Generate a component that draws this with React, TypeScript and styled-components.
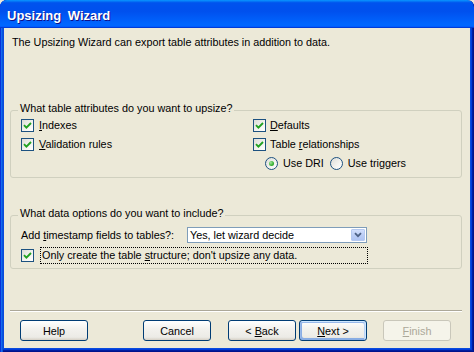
import React from 'react';
import styled, { createGlobalStyle, css } from 'styled-components';

const FONT = '"Liberation Sans", Arial, sans-serif';
const FACE = '#ECE9D8';
const GROUP_LINE = '#D0D0BF';
const CTL_BORDER = '#1C5180';
const CHECK_GREEN = '#21A121';

const GlobalStyle = createGlobalStyle`
  html, body { margin: 0; padding: 0; background: ${FACE}; }
  #root { width: 474px; height: 352px; }
  * { box-sizing: border-box; }
`;

const Window = styled.div`
  width: 474px; height: 352px; display: flex; flex-direction: column;
  padding: 0 4px 4px; border-radius: 7px 7px 0 0; overflow: hidden;
  background: #0A4BDD;
  box-shadow: inset 1px 0 #0831D9, inset 2px 0 #166AEE, inset 3px 0 #0855DD,
    inset -1px -1px #00138C, inset -2px -2px #001EA0, inset -3px -3px #003BDA;
  font-family: ${FONT}; font-size: 10.8px; color: #000;
`;
const TitleBar = styled.div`
  height: 28px; margin: 0 -4px; padding: 3px 0 0 7px; flex: none;
  border-radius: 7px 7px 0 0;
  background: linear-gradient(180deg, #0997FF 0%, #0053EE 10%, #0050EE 40%, #0066FF 86%, #0066FF 92%, #005BFF 95%, #003DD7 97%, #003DD7 100%);
`;
const TitleText = styled.div`
  line-height: 25px; font-size: 13px; font-weight: bold; color: #fff; word-spacing: 3px;
  text-shadow: 1px 1px #0F1089;
`;
const Body = styled.div`
  flex: 1; background: ${FACE}; padding: 0 8px 0 6px; display: flex; flex-direction: column;
`;
const Intro = styled.p`
  margin: 7px 0 0 2px; line-height: 14px;
`;
const GroupBox = styled.section<{ $top: number; $pad: string }>`
  position: relative; margin-top: ${p => p.$top}px; padding: ${p => p.$pad};
  border: 1px solid ${GROUP_LINE}; border-radius: 3px;
`;
const Caption = styled.div`
  position: absolute; top: -9px; left: 7px; padding: 0 2px;
  line-height: 12px; background: ${FACE};
`;
const OptionGrid = styled.div`
  display: grid; grid-template-columns: 232px 1fr; grid-auto-rows: 19px;
`;
const CheckRow = styled.label<{ $gap?: number }>`
  display: flex; align-items: center; gap: ${p => p.$gap ?? 4}px; line-height: 19px; white-space: nowrap;
`;
const boxBase = css`
  flex: none; width: 13px; height: 13px; border: 1px solid ${CTL_BORDER};
  background: linear-gradient(135deg, #DCDCD7 0%, #F4F4F0 60%, #FFFFFF 100%);
  display: flex; align-items: center; justify-content: center;
`;
const CheckBox = styled.span`
  ${boxBase}
`;
const RadioRow = styled.div`
  grid-column: 2; display: flex; align-items: center; gap: 6px; padding-left: 12px;
`;
const RadioOption = styled.label`
  display: flex; align-items: center; gap: 5px; line-height: 19px; white-space: nowrap;
`;
const Radio = styled.span<{ $checked?: boolean }>`
  ${boxBase}
  border-radius: 50%; border-color: #1C5180;
  &::after {
    content: ''; width: 5px; height: 5px; border-radius: 50%;
    display: ${p => (p.$checked ? 'block' : 'none')};
    background: radial-gradient(circle at 35% 35%, #A6E59F 0%, #3DB537 55%, #1A8A16 100%);
  }
`;
const FieldRow = styled.div`
  display: flex; align-items: center; height: 20px; line-height: 20px;
`;
const FieldLabel = styled.label`
  width: 166px; white-space: nowrap;
`;
const Combo = styled.div`
  width: 180px; height: 16px; display: flex; align-items: center;
  border: 1px solid #7F9DB9; background: #fff; padding: 0 1px 0 2px;
`;
const ComboText = styled.span`
  flex: 1; line-height: 14px; white-space: nowrap;
`;
const ComboButton = styled.span`
  width: 14px; height: 12px; border-radius: 1px; display: flex; align-items: center; justify-content: center;
  background: linear-gradient(180deg, #D2DFFC 0%, #BBCDF5 55%, #AFC4F3 100%);
  border: 1px solid #B5C9F0;
`;
const CheckFieldRow = styled.div`
  display: flex; align-items: center; gap: 6px; margin-top: 2px;
`;
const FocusLabel = styled.label`
  width: 328px; height: 17px; line-height: 15px; padding: 0 1px; border: 1px dotted #000; white-space: nowrap;
`;
const Separator = styled.div`
  margin-top: 41px; height: 2px; border-top: 1px solid #ACA899; border-bottom: 1px solid #fff;
`;
const Footer = styled.div`
  display: flex; margin-top: 8px; padding-left: 10px;
`;
const Button = styled.button<{ $gap?: number; $default?: boolean }>`
  width: 68px; height: 21px; margin-left: ${p => p.$gap ?? 0}px; padding: 0;
  font-family: ${FONT}; font-size: 10.8px; color: #000;
  border: 1px solid #003C74; border-radius: 3px;
  background: linear-gradient(180deg, #FFFFFF 0%, #F3F2EE 40%, #ECEBE6 85%, #D6D0C5 100%);
  ${p => p.$default && css`
    box-shadow: inset -1px 1px #CEE7FF, inset 1px 2px #98B8EA, inset -2px 2px #BCD4F6,
      inset 1px -1px #89ADE4, inset 2px -2px #89ADE4;
  `}
  &:disabled { color: #ACA899; border-color: #C9C7BA; background: #F5F4EA; box-shadow: none; }
`;

const Check = () => (
  <svg width="9" height="9" viewBox="0 0 9 9">
    <path d="M1 4.2 L3.4 6.6 L8 2" fill="none" stroke={CHECK_GREEN} strokeWidth="1.9" />
  </svg>
);

const Chevron = () => (
  <svg width="8" height="6" viewBox="0 0 8 6">
    <path d="M1 1.2 L4 4.2 L7 1.2" fill="none" stroke="#4D6185" strokeWidth="1.8" />
  </svg>
);

export default function App() {
  return (
    <>
      <GlobalStyle />
      <Window>
        <TitleBar>
          <TitleText>Upsizing Wizard</TitleText>
        </TitleBar>
        <Body>
          <Intro>The Upsizing Wizard can export table attributes in addition to data.</Intro>

          <GroupBox $top={61} $pad="5px 9px 4px 10px">
            <Caption>What table attributes do you want to upsize?</Caption>
            <OptionGrid>
              <CheckRow $gap={5}><CheckBox><Check /></CheckBox><span><u>I</u>ndexes</span></CheckRow>
              <CheckRow><CheckBox><Check /></CheckBox><span><u>D</u>efaults</span></CheckRow>
              <CheckRow $gap={5}><CheckBox><Check /></CheckBox><span><u>V</u>alidation rules</span></CheckRow>
              <CheckRow><CheckBox><Check /></CheckBox><span>Table <u>r</u>elationships</span></CheckRow>
              <RadioRow>
                <RadioOption><Radio $checked />Use DRI</RadioOption>
                <RadioOption><Radio />Use triggers</RadioOption>
              </RadioRow>
            </OptionGrid>
          </GroupBox>

          <GroupBox $top={37} $pad="9px 9px 4px 10px">
            <Caption>What data options do you want to include?</Caption>
            <FieldRow>
              <FieldLabel>Add <u>t</u>imestamp fields to tables?:</FieldLabel>
              <Combo>
                <ComboText>Yes, let wizard decide</ComboText>
                <ComboButton><Chevron /></ComboButton>
              </Combo>
            </FieldRow>
            <CheckFieldRow>
              <CheckBox><Check /></CheckBox>
              <FocusLabel>Only create the table <u>s</u>tructure; don't upsize any data.</FocusLabel>
            </CheckFieldRow>
          </GroupBox>

          <Separator />
          <Footer>
            <Button>Help</Button>
            <Button $gap={55}>Cancel</Button>
            <Button $gap={17}>&lt; <u>B</u>ack</Button>
            <Button $gap={3} $default><u>N</u>ext &gt;</Button>
            <Button $gap={16} disabled><u>F</u>inish</Button>
          </Footer>
        </Body>
      </Window>
    </>
  );
}
